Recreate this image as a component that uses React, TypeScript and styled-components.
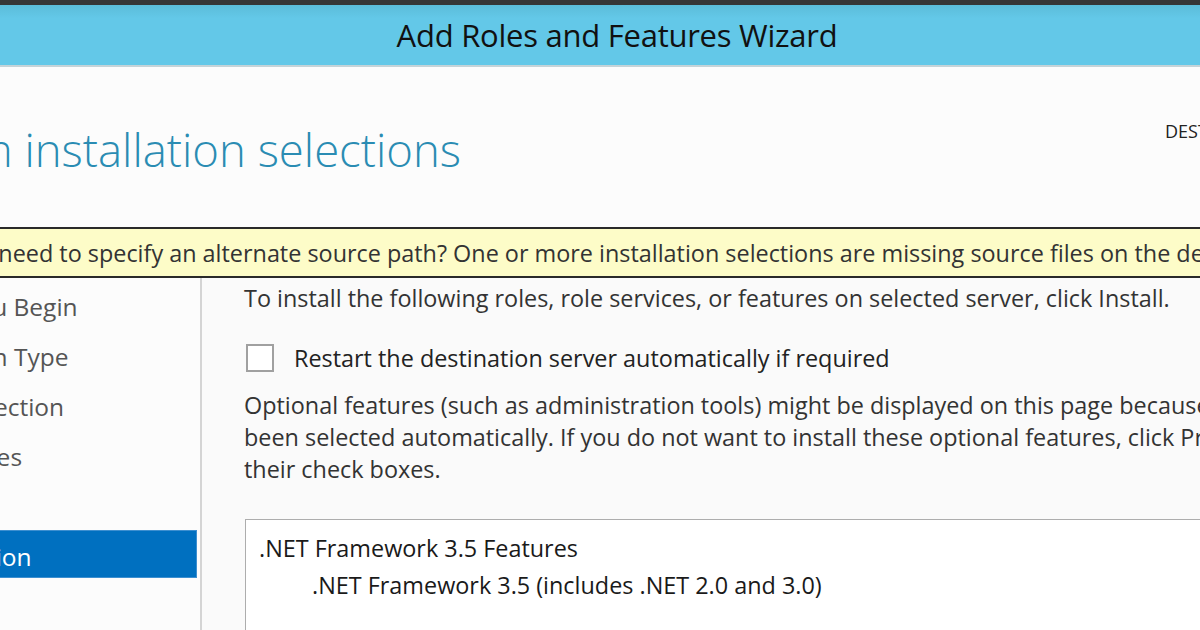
import styled, { createGlobalStyle } from "styled-components";

const OFFSET = 170;

const navItems = [
  "Before You Begin",
  "Installation Type",
  "Server Selection",
  "Server Roles",
  "Features",
  "Confirmation",
  "Results",
];

function App() {
  return (
    <Screen>
      <GlobalStyle />
      <TopStrip />
      <TitleBar>Add Roles and Features Wizard</TitleBar>
      <Wizard>
        <Header>
          <Heading>Confirm installation selections</Heading>
          <ServerInfo>DESTINATION SERVER</ServerInfo>
        </Header>
        <Banner>
          Do you need to specify an alternate source path? One or more installation selections are
          missing source files on the destination server.
        </Banner>
        <Body>
          <Nav>
            {navItems.map((item) => (
              <NavItem key={item} $active={item === "Confirmation"}>
                {item}
              </NavItem>
            ))}
          </Nav>
          <Content>
            <Intro>
              To install the following roles, role services, or features on selected server, click
              Install.
            </Intro>
            <CheckRow>
              <CheckBox />
              <span>Restart the destination server automatically if required</span>
            </CheckRow>
            <Paragraph>
              <Line>
                Optional features (such as administration tools) might be displayed on this page
                because they have
              </Line>
              <Line>
                been selected automatically. If you do not want to install these optional features,
                click Previous to clear
              </Line>
              <Line>their check boxes.</Line>
            </Paragraph>
            <ListBox>
              <ListItem $level={0}>.NET Framework 3.5 Features</ListItem>
              <ListItem $level={1}>.NET Framework 3.5 (includes .NET 2.0 and 3.0)</ListItem>
            </ListBox>
          </Content>
        </Body>
      </Wizard>
    </Screen>
  );
}

export default App;

const GlobalStyle = createGlobalStyle`
  html, body {
    margin: 0;
    padding: 0;
    background: #fcfcfc;
    overflow: hidden;
  }
`;

const Screen = styled.div`
  width: 1200px;
  height: 630px;
  overflow: hidden;
  display: flex;
  flex-direction: column;
  background: #fcfcfc;
  font-family: "Open Sans", "Noto Sans", sans-serif;
`;

const TopStrip = styled.div`
  height: 5px;
  flex: none;
  background: #363636;
`;

const TitleBar = styled.div`
  height: 60px;
  flex: none;
  display: flex;
  align-items: center;
  justify-content: center;
  padding-left: 34px;
  background: linear-gradient(#5bbcd9, #63c8e8 22%, #63c8e8);
  border-bottom: 2px solid #c4d3d8;
  color: #111;
  font-size: 31px;
  letter-spacing: -0.25px;
`;

const Wizard = styled.div`
  display: flex;
  flex-direction: column;
  flex: 1;
  margin-left: -${OFFSET}px;
  width: ${1400 + OFFSET}px;
`;

const Header = styled.div`
  height: 160px;
  display: grid;
  grid-template-columns: ${1165 + OFFSET}px auto;
  border-bottom: 2px solid #2a2a2a;
`;

const Heading = styled.h1`
  margin: 0;
  padding: 51px 0 0 19px;
  font-size: 45.5px;
  font-weight: 300;
  color: #2a8cb3;
  white-space: nowrap;
`;

const ServerInfo = styled.div`
  padding-top: 52px;
  font-size: 18px;
  color: #222;
  white-space: nowrap;
`;

const Banner = styled.div`
  height: 47px;
  display: flex;
  align-items: center;
  padding-left: 85px;
  background: #fdfcc8;
  border-bottom: 2px solid #2a2a2a;
  color: #333;
  font-size: 23.4px;
  white-space: nowrap;
`;

const Body = styled.div`
  display: flex;
  flex: 1;
`;

const Nav = styled.div`
  width: ${197 + OFFSET}px;
  flex: none;
  padding: 2px 3px 0 0;
  border-right: 2px solid #d4d4d4;
`;

const NavItem = styled.div<{ $active?: boolean }>`
  box-sizing: border-box;
  height: 48px;
  margin-bottom: 2px;
  display: flex;
  align-items: center;
  padding: 5px 0 0 51px;
  font-size: 24.5px;
  white-space: nowrap;
  color: ${(p) => (p.$active ? "#fff" : "#555")};
  background: ${(p) => (p.$active ? "#0070c0" : "transparent")};
  box-shadow: ${(p) => (p.$active ? "inset 0 0 0 1px #3d8fd0" : "none")};
`;

const Content = styled.div`
  flex: 1;
  padding: 4px 0 0 42px;
  background: #fafafa;
  color: #333;
  font-size: 23.4px;
`;

const Intro = styled.div`
  line-height: 32px;
  white-space: nowrap;
`;

const CheckRow = styled.label`
  display: flex;
  align-items: center;
  gap: 20px;
  height: 32px;
  margin-top: 28px;
  color: #222;
  white-space: nowrap;
`;

const CheckBox = styled.span`
  width: 24px;
  height: 24px;
  margin-left: 2px;
  border: 2px solid #a0a0a0;
  background: #fff;
`;

const Paragraph = styled.div`
  margin-top: 15px;
`;

const Line = styled.div`
  line-height: 32px;
  white-space: nowrap;
`;

const ListBox = styled.div`
  margin-top: 34px;
  margin-left: 1px;
  height: 200px;
  padding: 10px 0 0 13px;
  background: #fff;
  border: 1px solid #adadad;
  color: #1a1a1a;
`;

const ListItem = styled.div<{ $level: number }>`
  line-height: 37px;
  padding-left: ${(p) => p.$level * 53}px;
  white-space: nowrap;
`;
